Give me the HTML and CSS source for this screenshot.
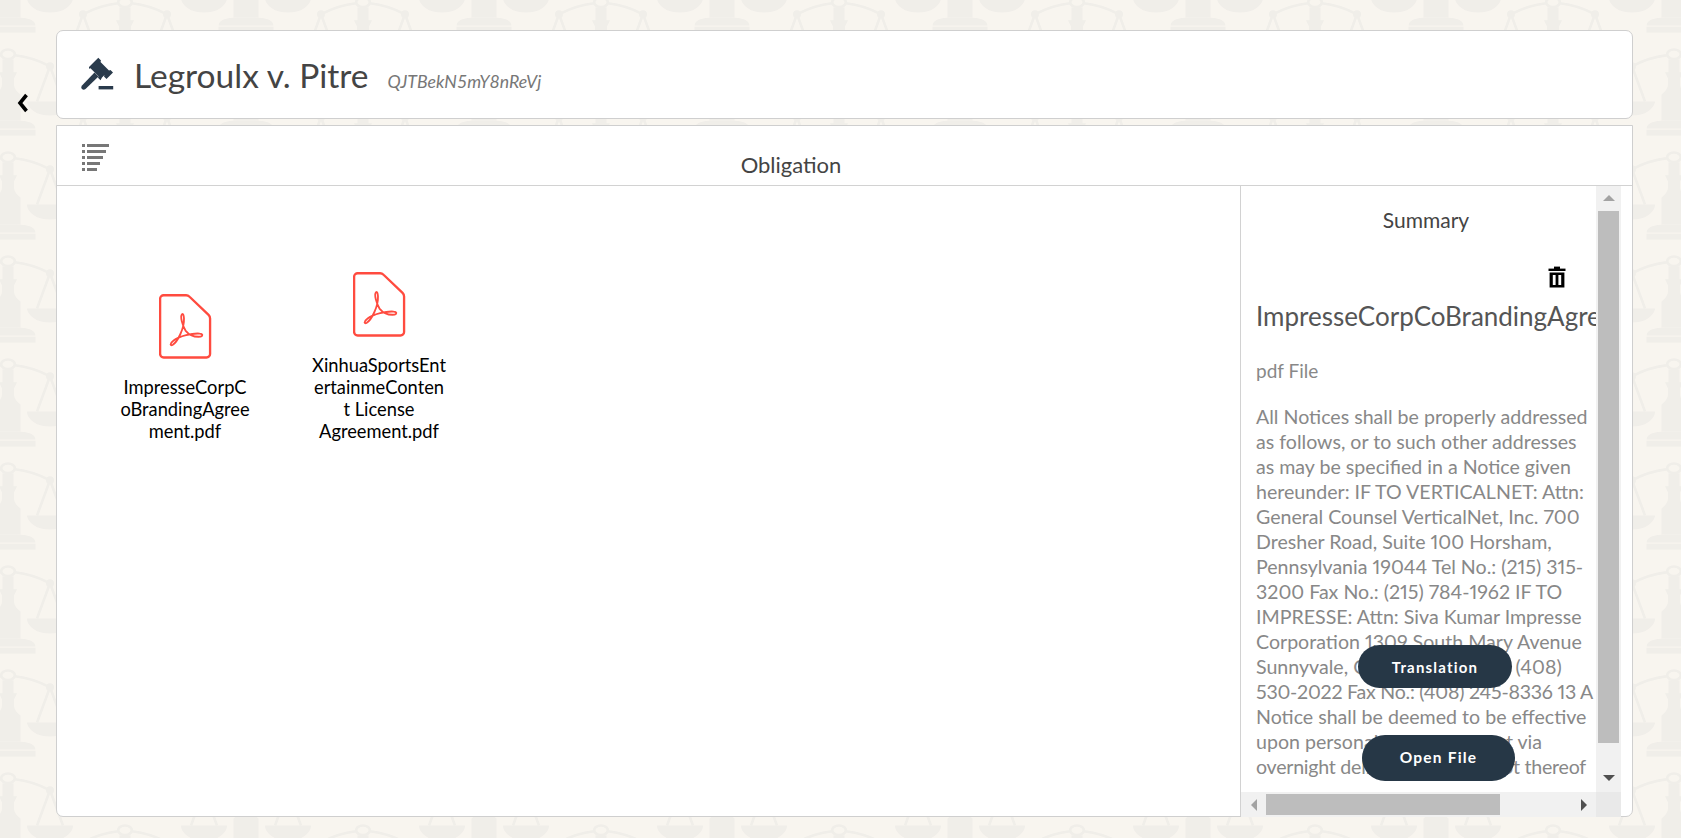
FILE: index.html
```html
<!DOCTYPE html>
<html lang="en">
<head>
<meta charset="utf-8">
<title>Legroulx v. Pitre</title>
<link rel="stylesheet" href="styles.css">
</head>
<body>
<a class="back" href="#" aria-label="Back"><svg width="12" height="20" viewBox="0 0 12 20"><path d="M9.5 2 L3 10 L9.5 18" fill="none" stroke="#000" stroke-width="3.6"/></svg></a>
<main class="page">
  <header class="card title-card">
    <svg class="gavel" width="34" height="34" viewBox="0 0 34 34"><path d="M17.3 0.7 L20 3.5 L19.5 5 L28 13.5 L29.5 13 L32 15.5 L25.5 22 L23 19.5 L23.5 18 L21 20.5 L19.5 23.2 L17 20.7 L17.5 19.2 L9.5 11.2 L8 11.7 L8 10 Z" fill="#2a3b4c"/><path d="M13.5 15.5 L17.5 19.5 L4.5 32 Q2.5 33.5 1 32 Q-0.5 30.5 1 28.5 Z" fill="#2a3b4c"/><rect x="17.6" y="29" width="14.6" height="3.4" fill="#2a3b4c"/></svg>
    <h1 class="case-name">Legroulx v. Pitre</h1>
    <span class="case-id">QJTBekN5mY8nReVj</span>
  </header>
  <section class="card work-card">
    <div class="work-head">
      <svg class="sort" width="28" height="27" viewBox="0 0 28 27" fill="#777"><rect x="0" y="0" width="3" height="3"/><rect x="5" y="0" width="22" height="3"/><rect x="0" y="6" width="3" height="3"/><rect x="5" y="6" width="19" height="3"/><rect x="0" y="12" width="3" height="3"/><rect x="5" y="12" width="16" height="3"/><rect x="0" y="18" width="3" height="3"/><rect x="5" y="18" width="13" height="3"/><rect x="0" y="24" width="3" height="3"/><rect x="5" y="24" width="10" height="3"/></svg>
      <h2 class="work-title">Obligation</h2>
    </div>
    <div class="work-body">
      <div class="files">
        <figure class="file">
          <svg class="pdf" width="53" height="65" viewBox="0 0 52 64"><path class="pdf-sheet" d="M4.5 1.2 H26.5 Q28.5 1.2 30 2.7 L48.7 20.5 Q50.2 22 50.2 24 V59 A3.5 3.5 0 0 1 46.7 62.5 H4.5 A3.5 3.5 0 0 1 1 59 V4.7 A3.5 3.5 0 0 1 4.5 1.2 Z"/><path class="pdf-mark" d="M22.5 20 C20.5 22 23 31 26 36 C30 41 36 42.5 41 42 C43.5 41 43 39 40 39 C33 38.5 20 41 14 46 C10 49 11 51.5 13.5 50 C18 47 25 34 24.5 24 C24.3 20.5 23.5 19 22.5 20 Z"/></svg>
          <figcaption class="file-name">ImpresseCorpC<br>oBrandingAgree<br>ment.pdf</figcaption>
        </figure>
        <figure class="file">
          <svg class="pdf" width="53" height="65" viewBox="0 0 52 64"><path class="pdf-sheet" d="M4.5 1.2 H26.5 Q28.5 1.2 30 2.7 L48.7 20.5 Q50.2 22 50.2 24 V59 A3.5 3.5 0 0 1 46.7 62.5 H4.5 A3.5 3.5 0 0 1 1 59 V4.7 A3.5 3.5 0 0 1 4.5 1.2 Z"/><path class="pdf-mark" d="M22.5 20 C20.5 22 23 31 26 36 C30 41 36 42.5 41 42 C43.5 41 43 39 40 39 C33 38.5 20 41 14 46 C10 49 11 51.5 13.5 50 C18 47 25 34 24.5 24 C24.3 20.5 23.5 19 22.5 20 Z"/></svg>
          <figcaption class="file-name">XinhuaSportsEnt<br>ertainmeConten<br>t License<br>Agreement.pdf</figcaption>
        </figure>
      </div>
      <aside class="summary">
        <div class="summary-scroll">
          <h3 class="summary-title">Summary</h3>
          <div class="summary-tools">
            <svg class="trash" width="18" height="22" viewBox="0 0 18 22"><rect x="0.5" y="2.6" width="17" height="2.4"/><rect x="6" y="0.6" width="6" height="2.4"/><path fill-rule="evenodd" d="M1.6 6.4 H16.4 V21.6 H1.6 Z M4.8 9 V19 H7.6 V9 Z M10.4 9 V19 H13.2 V9 Z"/></svg>
          </div>
          <p class="doc-name">ImpresseCorpCoBrandingAgreement.pdf</p>
          <p class="doc-type">pdf File</p>
          <p class="doc-text">All Notices shall be properly addressed<br>as follows, or to such other addresses<br>as may be specified in a Notice given<br>hereunder: IF TO VERTICALNET: Attn:<br>General Counsel VerticalNet, Inc. 700<br>Dresher Road, Suite 100 Horsham,<br>Pennsylvania 19044 Tel No.: (215) 315-<br>3200 Fax No.: (215) 784-1962 IF TO<br>IMPRESSE: Attn: Siva Kumar Impresse<br>Corporation 1309 South Mary Avenue<br>Sunnyvale, CA 94086 Tel No.: (408)<br><span class="tight">530-2022 Fax No.: (408) 245-8336 13 A</span><br>Notice shall be deemed to be effective<br>upon personal delivery, if sent via<br><span class="tight">overnight delivery, upon receipt thereof</span></p>
        </div>
        <div class="vbar">
          <span class="arrow arrow-up"></span>
          <span class="vthumb"></span>
          <span class="arrow arrow-down"></span>
        </div>
        <div class="hbar">
          <span class="arrow arrow-left"></span>
          <span class="hthumb"></span>
          <span class="arrow arrow-right"></span>
        </div>
        <div class="corner"></div>
        <button class="pill pill-translate">Translation</button>
        <button class="pill pill-open">Open File</button>
      </aside>
    </div>
  </section>
</main>
</body>
</html>
```
FILE: styles.css
```css
* { box-sizing: border-box; }
html, body { margin: 0; height: 100%; }
body {
  height: 838px;
  overflow: hidden;
  position: relative;
  font-family: Lato, "Liberation Sans", sans-serif;
  background-color: #f8f5ef;
  background-image: url("data:image/svg+xml,%3Csvg xmlns='http://www.w3.org/2000/svg' xmlns:xlink='http://www.w3.org/1999/xlink' width='238' height='103.5' viewBox='0 0 238 103.5'%3E%3Cdefs%3E%3Cg id='m'%3E%3Cg fill='none' stroke='%23f0eee9' stroke-width='2.6'%3E%3Cellipse cx='0' cy='0' rx='6.8' ry='4.8'/%3E%3Cpath d='M-7 1Q-25 3-42 12M7 1Q25 3 42 12M-42 12L-55 47M-42 12L-29 47M42 12L29 47M42 12L55 47'/%3E%3C/g%3E%3Cg fill='%23f0eee9'%3E%3Ccircle cx='-42' cy='12' r='4'/%3E%3Ccircle cx='42' cy='12' r='4'/%3E%3Cpath d='M-65 47H-19A23 15 0 0 1-65 47ZM19 47H65A23 15 0 0 1 19 47Z'/%3E%3Cpath d='M-5.5 5H5.5V18H9L6 24V30Q6 35 12.5 40V67H-12.5V40Q-6 35-6 30V24L-9 18H-5.5Z'/%3E%3Cpath d='M-27.5 75Q-27 67-8 67H8Q27 67 27.5 75Z'/%3E%3Crect x='-27.5' y='76' width='55' height='6'/%3E%3C/g%3E%3C/g%3E%3C/defs%3E%3Cuse href='%23m' x='8' y='54'/%3E%3Cuse href='%23m' x='246' y='54'/%3E%3Cuse href='%23m' x='8' y='-49.5'/%3E%3Cuse href='%23m' x='246' y='-49.5'/%3E%3Cuse href='%23m' x='125' y='2.25'/%3E%3Cuse href='%23m' x='125' y='105.75'/%3E%3C/svg%3E");
  background-size: 238px 103.5px;
}
.back { position: absolute; left: 17px; top: 93px; display: block; line-height: 0; }
.page {
  display: flex;
  flex-direction: column;
  gap: 6px;
  height: 838px;
  padding: 30px 48px 21px 56px;
}
.card { background: #fff; border: 1px solid #cfcfcf; }
.title-card {
  flex: 0 0 89px;
  display: flex;
  align-items: baseline;
  padding: 0 0 0 24px;
  border-radius: 7px;
}
.gavel { align-self: flex-start; margin-top: 26px; margin-right: 19px; }
.case-name { margin: 0; padding-top: 22px; font-size: 33.5px; font-weight: 400; line-height: 44px; color: #444; }
.case-id { margin-left: 19px; font-size: 17.7px; font-style: italic; color: #777; }
.work-card {
  flex: 1 1 auto;
  min-height: 0;
  display: flex;
  flex-direction: column;
  border-radius: 0 0 7px 7px;
}
.work-head {
  flex: 0 0 60px;
  position: relative;
  padding: 18px 0 0 25px;
  border-bottom: 1px solid #d2d2d2;
}
.sort { display: block; }
.work-title {
  margin: -21px 132px 0 0;
  text-align: center;
  font-size: 22px;
  font-weight: 400;
  line-height: 30px;
  color: #444;
}
.work-body { flex: 1 1 auto; min-height: 0; display: flex; }
.files {
  flex: 1 1 auto;
  display: flex;
  align-items: flex-end;
  gap: 60px;
  height: 256px;
  padding-left: 61px;
}
.file { width: 134px; margin: 0; text-align: center; }
.pdf { display: block; margin: 0 auto 17px; }
.pdf-sheet { fill: none; stroke: #ff4b3f; stroke-width: 2.3; }
.pdf-mark { fill: none; stroke: #ff4b3f; stroke-width: 1.8; }
.file-name { font-size: 18.3px; line-height: 22px; color: #000; white-space: nowrap; }
.summary {
  flex: 0 0 392px;
  position: relative;
  display: grid;
  grid-template-columns: 355px 25px;
  grid-template-rows: 606px 25px;
  border-left: 1px solid #d2d2d2;
}
.summary-scroll { overflow: hidden; padding: 0 0 0 15px; }
.summary-title {
  margin: 19px 0 0;
  text-align: center;
  font-size: 21px;
  font-weight: 400;
  line-height: 30px;
  color: #444;
}
.summary-tools { display: flex; justify-content: flex-end; margin-top: 31px; padding-right: 30px; height: 22px; }
.trash { fill: #000; }
.doc-name { margin: 11px 0 0; font-size: 26px; line-height: 34px; white-space: nowrap; color: #555; }
.doc-type { margin: 25px 0 0; font-size: 19px; line-height: 26px; color: #888; }
.doc-text { margin: 20px 0 0; font-size: 19.6px; line-height: 25px; white-space: nowrap; color: #888; font-variant-numeric: proportional-nums; }
.tight { letter-spacing: -0.25px; }
.vbar { display: flex; flex-direction: column; align-items: center; background: #f1f1f1; }
.vthumb { width: 21px; height: 532px; background: #bdbdbd; }
.hbar { display: flex; align-items: center; background: #f1f1f1; }
.hthumb { width: 234px; height: 21px; background: #bdbdbd; }
.corner { background: #e9e9e9; }
.arrow { display: block; flex: none; width: 0; height: 0; border-style: solid; border-color: transparent; }
.arrow-up { margin: 9px 0 10px; border-width: 0 6px 6px; border-bottom-color: #a3a3a3; }
.arrow-down { margin: 32px 0 0; border-width: 6px 6px 0; border-top-color: #505050; }
.arrow-left { margin: 0 9px 0 10px; border-width: 6px 6px 6px 0; border-right-color: #a3a3a3; }
.arrow-right { margin-left: 81px; border-width: 6px 0 6px 6px; border-left-color: #505050; }
.pill {
  position: absolute;
  border: 0;
  border-radius: 23px;
  background: #263746;
  color: #fff;
  font-family: inherit;
  font-size: 15px;
  font-weight: 700;
  letter-spacing: 1.2px;
}
.pill-translate { left: 117px; top: 459px; width: 154px; height: 43px; }
.pill-open { left: 121px; top: 549px; width: 153px; height: 46px; padding-bottom: 3px; font-size: 15.5px; }
```
